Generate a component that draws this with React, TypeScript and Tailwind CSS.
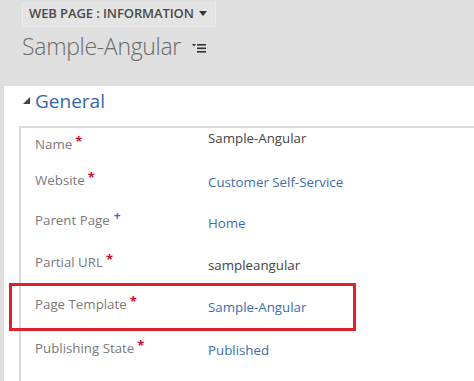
import React from 'react';

type Field = {
  label: string;
  value: string;
  link?: boolean;
  mark: 'required' | 'recommended';
  h: string;
  valueClass?: string;
};

const fields: Field[] = [
  { label: 'Name', value: 'Sample-Angular', mark: 'required', h: 'h-[34px]', valueClass: '-mt-[12px]' },
  { label: 'Website', value: 'Customer Self-Service', link: true, mark: 'required', h: 'h-[38px]', valueClass: 'mt-[4px]' },
  { label: 'Parent Page', value: 'Home', link: true, mark: 'recommended', h: 'h-[42px]', valueClass: 'mt-[6px]' },
  { label: 'Partial URL', value: 'sampleangular', mark: 'required', h: 'h-[42px]', valueClass: 'mt-[6px]' },
  { label: 'Page Template', value: 'Sample-Angular', link: true, mark: 'required', h: 'h-[43px]', valueClass: 'mt-[6px]' },
  { label: 'Publishing State', value: 'Published', link: true, mark: 'required', h: 'h-[44px]', valueClass: 'mt-[4px]' },
];

const FieldRow = ({ field }: { field: Field }) => (
  <div className={`flex items-center ${field.h}`}>
    <div className="w-[187px] pl-[14px] text-[13.3px] text-[#7a7a7a] flex items-start">
      <span>{field.label}</span>
      {field.mark === 'required' ? (
        <span className="ml-[3px] -mt-[3px] text-[13px] font-bold text-[#c8102e]">*</span>
      ) : (
        <span className="ml-[4px] -mt-[4px] text-[12px] font-bold text-[#3b6cb7]">+</span>
      )}
    </div>
    <div
      className={`text-[13.3px] ${field.link ? 'text-[#3c6db0]' : 'text-[#444444]'} ${field.valueClass ?? ''}`}
    >
      {field.value}
    </div>
  </div>
);

export default function App() {
  return (
    <div
      className="relative w-[474px] h-[381px] overflow-hidden bg-[#dfdfdf] flex flex-col"
      style={{ fontFamily: '"Open Sans", "Noto Sans", sans-serif' }}
    >
      {/* Header */}
      <div className="pl-[22px]">
        <div className="inline-flex items-center h-[25px] pl-[6px] pr-[8px] bg-[#e4e4e4] border border-t-0 border-[#ececec] text-[13px] font-semibold text-[#4a4a4a] tracking-[-0.1px]">
          WEB PAGE : INFORMATION
          <svg width="8" height="5" viewBox="0 0 8 5" className="ml-[5px]">
            <path d="M0 0h8L4 5z" fill="#333" />
          </svg>
        </div>
        <div className="flex items-center h-[38px]">
          <span className="text-[23px] font-light text-[#6b6b6b] tracking-[-0.3px]">Sample-Angular</span>
          <svg width="14" height="10" viewBox="0 0 14 10" className="ml-[11px] mt-[4px]">
            <path d="M0 1h4L2 3.5z" fill="#333" />
            <rect x="5" y="1" width="9" height="1.6" fill="#333" />
            <rect x="5" y="4.5" width="9" height="1.6" fill="#333" />
            <rect x="5" y="8" width="9" height="1.6" fill="#333" />
          </svg>
        </div>
      </div>

      {/* Form panel */}
      <div className="flex-1 ml-[4px] mt-[21px] bg-white flex flex-col">
        <div className="flex items-center h-[30px] pl-[19px]">
          <svg width="7" height="7" viewBox="0 0 7 7">
            <path d="M7 0v7H0z" fill="#444" />
          </svg>
          <span className="ml-[5px] text-[19px] text-[#3466ad]">General</span>
        </div>
        <div className="flex-1 ml-[15px] mt-[10px] border-t-2 border-l-2 border-[#dadada]">
          {fields.map((f) => (
            <FieldRow key={f.label} field={f} />
          ))}
        </div>
      </div>

      {/* Highlight annotation */}
      <div className="absolute left-[9px] top-[283px] w-[347px] h-[48px] border-[3px] border-[#e0202a]" />
    </div>
  );
}
